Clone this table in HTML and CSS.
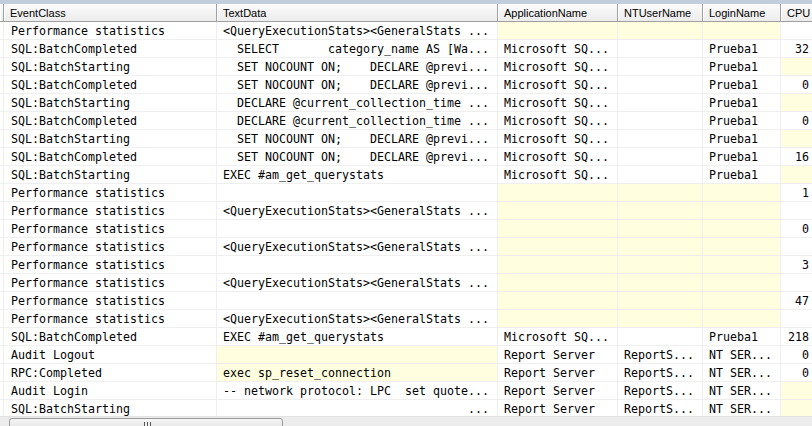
FILE: index.html
```html
<!DOCTYPE html>
<html>
<head>
<meta charset="utf-8">
<link rel="stylesheet" href="styles.css">
</head>
<body>
<div class="topband"></div>
<div class="grid">
  <div class="row head">
    <div class="h"></div><div class="h">EventClass</div><div class="h">TextData</div><div class="h">ApplicationName</div><div class="h">NTUserName</div><div class="h">LoginName</div><div class="h">CPU</div>
  </div>
  <div class="row"><div class="c"></div><div class="c ec">Performance statistics</div><div class="c">&lt;QueryExecutionStats&gt;&lt;GeneralStats ...</div><div class="c n"></div><div class="c n"></div><div class="c n"></div><div class="c num"></div></div>
  <div class="row"><div class="c"></div><div class="c ec">SQL:BatchCompleted</div><div class="c">  SELECT       category_name AS [Wa...</div><div class="c">Microsoft SQ...</div><div class="c"></div><div class="c">Prueba1</div><div class="c num">32</div></div>
  <div class="row"><div class="c"></div><div class="c ec">SQL:BatchStarting</div><div class="c">  SET NOCOUNT ON;    DECLARE @previ...</div><div class="c">Microsoft SQ...</div><div class="c"></div><div class="c">Prueba1</div><div class="c num n"></div></div>
  <div class="row"><div class="c"></div><div class="c ec">SQL:BatchCompleted</div><div class="c">  SET NOCOUNT ON;    DECLARE @previ...</div><div class="c">Microsoft SQ...</div><div class="c"></div><div class="c">Prueba1</div><div class="c num">0</div></div>
  <div class="row"><div class="c"></div><div class="c ec">SQL:BatchStarting</div><div class="c">  DECLARE @current_collection_time ...</div><div class="c">Microsoft SQ...</div><div class="c"></div><div class="c">Prueba1</div><div class="c num n"></div></div>
  <div class="row"><div class="c"></div><div class="c ec">SQL:BatchCompleted</div><div class="c">  DECLARE @current_collection_time ...</div><div class="c">Microsoft SQ...</div><div class="c"></div><div class="c">Prueba1</div><div class="c num">0</div></div>
  <div class="row"><div class="c"></div><div class="c ec">SQL:BatchStarting</div><div class="c">  SET NOCOUNT ON;    DECLARE @previ...</div><div class="c">Microsoft SQ...</div><div class="c"></div><div class="c">Prueba1</div><div class="c num n"></div></div>
  <div class="row"><div class="c"></div><div class="c ec">SQL:BatchCompleted</div><div class="c">  SET NOCOUNT ON;    DECLARE @previ...</div><div class="c">Microsoft SQ...</div><div class="c"></div><div class="c">Prueba1</div><div class="c num">16</div></div>
  <div class="row"><div class="c"></div><div class="c ec">SQL:BatchStarting</div><div class="c">EXEC #am_get_querystats</div><div class="c">Microsoft SQ...</div><div class="c"></div><div class="c">Prueba1</div><div class="c num n"></div></div>
  <div class="row"><div class="c"></div><div class="c ec">Performance statistics</div><div class="c"></div><div class="c n"></div><div class="c n"></div><div class="c n"></div><div class="c num">1</div></div>
  <div class="row"><div class="c"></div><div class="c ec">Performance statistics</div><div class="c">&lt;QueryExecutionStats&gt;&lt;GeneralStats ...</div><div class="c n"></div><div class="c n"></div><div class="c n"></div><div class="c num"></div></div>
  <div class="row"><div class="c"></div><div class="c ec">Performance statistics</div><div class="c"></div><div class="c n"></div><div class="c n"></div><div class="c n"></div><div class="c num">0</div></div>
  <div class="row"><div class="c"></div><div class="c ec">Performance statistics</div><div class="c">&lt;QueryExecutionStats&gt;&lt;GeneralStats ...</div><div class="c n"></div><div class="c n"></div><div class="c n"></div><div class="c num"></div></div>
  <div class="row"><div class="c"></div><div class="c ec">Performance statistics</div><div class="c"></div><div class="c n"></div><div class="c n"></div><div class="c n"></div><div class="c num">3</div></div>
  <div class="row"><div class="c"></div><div class="c ec">Performance statistics</div><div class="c">&lt;QueryExecutionStats&gt;&lt;GeneralStats ...</div><div class="c n"></div><div class="c n"></div><div class="c n"></div><div class="c num"></div></div>
  <div class="row"><div class="c"></div><div class="c ec">Performance statistics</div><div class="c"></div><div class="c n"></div><div class="c n"></div><div class="c n"></div><div class="c num">47</div></div>
  <div class="row"><div class="c"></div><div class="c ec">Performance statistics</div><div class="c">&lt;QueryExecutionStats&gt;&lt;GeneralStats ...</div><div class="c n"></div><div class="c n"></div><div class="c n"></div><div class="c num"></div></div>
  <div class="row"><div class="c"></div><div class="c ec">SQL:BatchCompleted</div><div class="c">EXEC #am_get_querystats</div><div class="c">Microsoft SQ...</div><div class="c"></div><div class="c">Prueba1</div><div class="c num">218</div></div>
  <div class="row"><div class="c"></div><div class="c ec">Audit Logout</div><div class="c n"></div><div class="c">Report Server</div><div class="c">ReportS...</div><div class="c">NT SER...</div><div class="c num">0</div></div>
  <div class="row"><div class="c"></div><div class="c ec">RPC:Completed</div><div class="c n">exec sp_reset_connection</div><div class="c">Report Server</div><div class="c">ReportS...</div><div class="c">NT SER...</div><div class="c num">0</div></div>
  <div class="row"><div class="c"></div><div class="c ec">Audit Login</div><div class="c">-- network protocol: LPC  set quote...</div><div class="c">Report Server</div><div class="c">ReportS...</div><div class="c">NT SER...</div><div class="c num n"></div></div>
  <div class="row"><div class="c"></div><div class="c ec">SQL:BatchStarting</div><div class="c">                                   ...</div><div class="c">Report Server</div><div class="c">ReportS...</div><div class="c">NT SER...</div><div class="c num n"></div></div>
</div>
<div class="hscroll">
  <div class="thumb"><span class="grip"></span></div>
</div>
</body>
</html>
```

FILE: styles.css
```css
html, body {
  margin: 0;
  padding: 0;
  width: 812px;
  height: 426px;
  overflow: hidden;
  background: #ffffff;
}

.topband {
  height: 4px;
  background: #bfcddc;
}

.grid {
  height: 412px;
  overflow: hidden;
}

.row {
  display: grid;
  grid-template-columns: 4px 213px 281px 120px 85px 78px 40px;
  width: 821px;
  height: 18px;
}

.h {
  box-sizing: border-box;
  height: 18px;
  background: linear-gradient(#fbfbfb, #ececec);
  border-right: 1px solid #a0a0a0;
  border-bottom: 1px solid #a0a0a0;
  box-shadow: inset 1px 1px 0 #ffffff;
  font-family: "Liberation Sans", Arial, sans-serif;
  font-size: 11px;
  color: #000;
  line-height: 18px;
  padding-left: 6px;
  white-space: nowrap;
  overflow: hidden;
}

.h:first-child {
  padding-left: 0;
}

.c {
  box-sizing: border-box;
  height: 18px;
  border-right: 1px solid #efefef;
  border-bottom: 1px solid #efefef;
  font-family: "DejaVu Sans Mono", "Liberation Mono", monospace;
  font-size: 11.63px;
  line-height: 19px;
  color: #000;
  padding-left: 6px;
  white-space: pre;
  overflow: hidden;
}

.c:first-child {
  padding-left: 0;
}

.ec {
  padding-left: 7px;
}

.n {
  background: #ffffe0;
}

.num {
  text-align: right;
  padding-left: 0;
  padding-right: 11px;
}

.hscroll {
  height: 17px;
  background: #ececec;
  border-top: 1px solid #e2e2e2;
  position: relative;
}

.thumb {
  position: absolute;
  left: 9px;
  top: 1px;
  width: 274px;
  height: 15px;
  box-sizing: border-box;
  border: 1px solid #9a9a9a;
  border-radius: 3px;
  background: linear-gradient(#f6f6f6, #dcdcdc);
}

.grip {
  position: absolute;
  left: 134px;
  top: 3px;
  width: 7px;
  height: 8px;
  background: repeating-linear-gradient(90deg, #555 0, #555 1px, #f2f2f2 1px, #f2f2f2 3px);
}
```
